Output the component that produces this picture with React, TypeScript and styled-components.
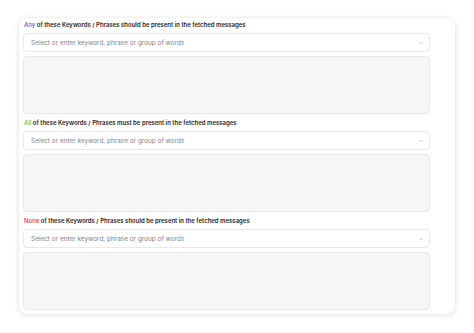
import React from "react";
import styled, { createGlobalStyle } from "styled-components";

const Global = createGlobalStyle`
  html, body { margin: 0; padding: 0; background: #ffffff; }
  body { font-family: Inter, "Noto Sans", sans-serif; }
`;

const Page = styled.div`
  padding: 18px 19px 19px 19px;
`;

const Card = styled.div`
  width: 436px;
  box-sizing: border-box;
  background: #ffffff;
  border-radius: 8px;
  box-shadow: 0 1px 6px rgba(0, 0, 0, 0.12), 0 0 2px rgba(0, 0, 0, 0.05);
  padding: 2px 25px 4px 4px;
  display: flex;
  flex-direction: column;
`;

const Section = styled.div`
  display: flex;
  flex-direction: column;
  & + & {
    margin-top: 4px;
  }
`;

const Label = styled.div`
  font-size: 6px;
  line-height: 10px;
  height: 10px;
  font-weight: 600;
  color: #26262a;
  padding-left: 1px;
  margin-bottom: 3px;
  white-space: nowrap;
`;

const Keyword = styled.span<{ $color: string }>`
  color: ${(p) => p.$color};
  font-weight: 500;
`;

const Select = styled.div`
  height: 19px;
  box-sizing: border-box;
  border: 1px solid #e9e9ec;
  border-radius: 4px;
  background: #ffffff;
  display: flex;
  align-items: center;
  justify-content: space-between;
  padding: 0 5px 0 7px;
  margin-bottom: 4px;
`;

const Placeholder = styled.span`
  font-size: 6.45px;
  color: #85858b;
  white-space: nowrap;
`;

const Chevron = styled.svg`
  width: 6px;
  height: 6px;
  color: #9c9ca2;
`;

const Area = styled.div`
  height: 58px;
  box-sizing: border-box;
  border: 1px solid #e8e8eb;
  border-radius: 4px;
  background: #f6f6f8;
`;

const sections = [
  { key: "Any", color: "#3d5bd9", rest: " of these Keywords / Phrases should be present in the fetched messages" },
  { key: "All", color: "#5cbf5a", rest: " of these Keywords / Phrases must be present in the fetched messages" },
  { key: "None", color: "#e0286a", rest: " of these Keywords / Phrases should be present in the fetched messages" },
];

export default function App() {
  return (
    <>
      <Global />
      <Page>
        <Card>
          {sections.map((s) => (
            <Section key={s.key}>
              <Label>
                <Keyword $color={s.color}>{s.key}</Keyword>
                {s.rest}
              </Label>
              <Select>
                <Placeholder>Select or enter keyword, phrase or group of words</Placeholder>
                <Chevron viewBox="0 0 24 24" fill="none" stroke="currentColor" strokeWidth="2" strokeLinecap="round" strokeLinejoin="round">
                  <path d="M6 9l6 6 6-6" />
                </Chevron>
              </Select>
              <Area />
            </Section>
          ))}
        </Card>
      </Page>
    </>
  );
}
